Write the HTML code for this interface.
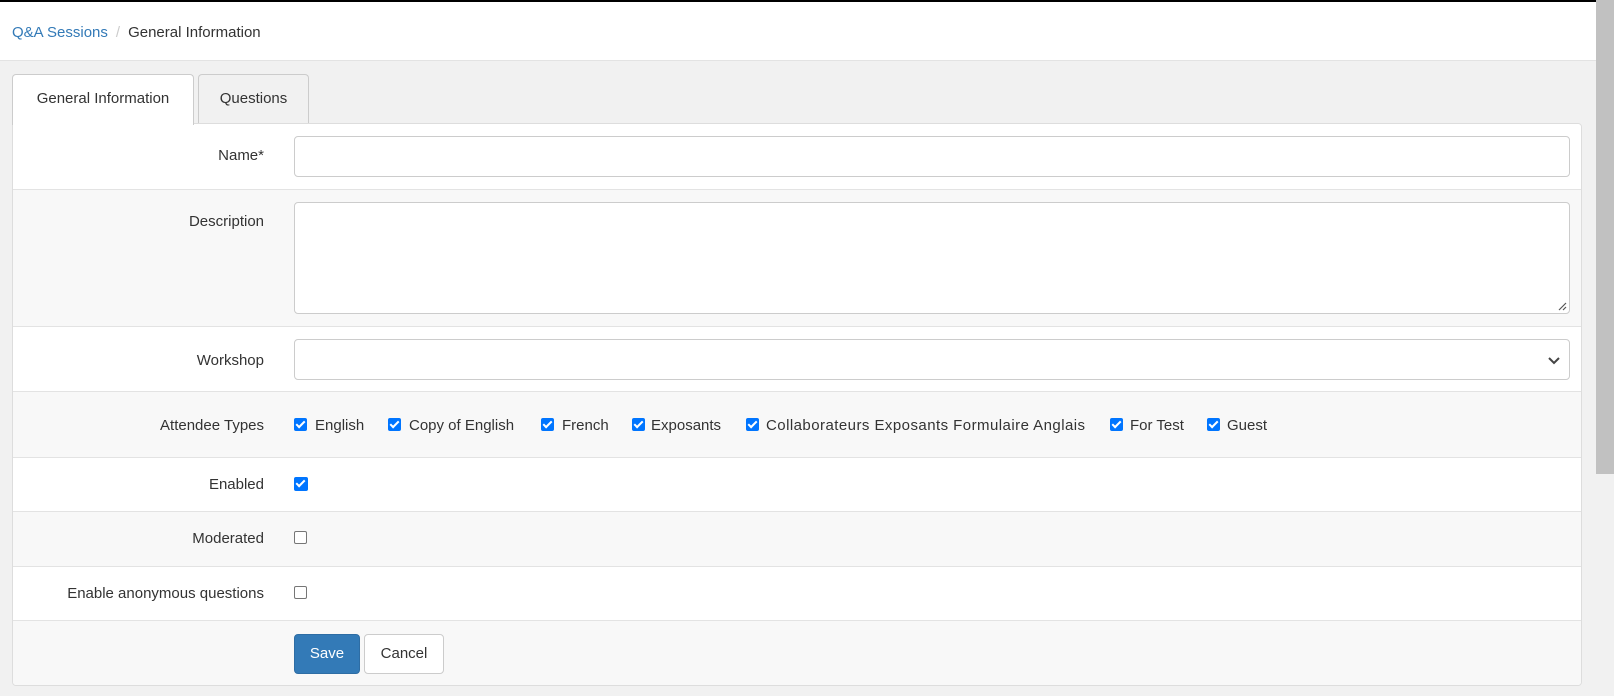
<!DOCTYPE html>
<html><head><meta charset="utf-8"><style>
*{box-sizing:border-box;margin:0;padding:0}
body{width:1614px;height:696px;overflow:hidden;background:#f1f1f1;font-family:"Liberation Sans",sans-serif;font-size:15px;color:#333;position:relative}
.top{position:absolute;left:0;top:0;width:1596px;height:2px;background:#000}
.hdr{position:absolute;left:0;top:2px;width:1596px;height:59px;background:#fff;border-bottom:1px solid #e3e3e3}
.bc{position:absolute;left:12px;top:22px;font-size:15px}
.bc a{color:#337ab7;text-decoration:none}
.bc .s{color:#ccc;margin:0 8px}
.sb{position:absolute;left:1596px;top:0;width:18px;height:696px;background:#f1f1f1}
.sb div{position:absolute;left:0;top:0;width:18px;height:474px;background:#c1c1c1}
.tab{position:absolute;top:74px;height:50px;border:1px solid #ccc;border-bottom:none;border-radius:4px 4px 0 0;padding-top:15px;text-align:center}
.panel{position:absolute;left:12px;top:123px;width:1570px;height:563px;background:#fff;border:1px solid #ddd;border-radius:0 4px 4px 4px;overflow:hidden}
.row{position:absolute;left:0;width:1570px;border-bottom:1px solid #e3e3e3}
.lab{position:absolute;right:1319px;text-align:right;white-space:nowrap;margin-top:3px}
.inp{position:absolute;left:281px;width:1276px;border:1px solid #ccc;border-radius:4px;background:#fff}
.cb{position:absolute;width:13px;height:13px;border-radius:2px;background:#0075ff}
.cb::after{content:"";position:absolute;left:4px;top:1px;width:3px;height:7px;border:solid #fff;border-width:0 2px 2px 0;transform:rotate(45deg)}
.ub{position:absolute;width:13px;height:13px;border-radius:2px;border:1px solid #767676;background:#fff}
.t{position:absolute;white-space:nowrap}
</style></head><body>
<div class="top"></div>
<div class="hdr"><div class="bc"><a>Q&amp;A Sessions</a><span class="s">/</span>General Information</div></div>
<div class="sb"><div></div></div>
<div class="tab" style="left:12px;width:182px;background:#fff;height:51px;z-index:2">General Information</div>
<div class="tab" style="left:198px;width:111px;background:#f1f1f1">Questions</div>
<div class="panel">
 <div class="row" style="top:0;height:66px;background:#fff"><div class="lab" style="top:20px">Name*</div><div class="inp" style="top:12px;height:41px"></div></div>
 <div class="row" style="top:66px;height:137px;background:#f8f8f8"><div class="lab" style="top:20px">Description</div><div class="inp" style="top:12px;height:112px">
  <svg style="position:absolute;right:2px;bottom:2px" width="10" height="10"><path d="M2 9L9 2M6 9L9 6" stroke="#555" stroke-width="1.2"/></svg></div></div>
 <div class="row" style="top:203px;height:65px;background:#fff"><div class="lab" style="top:22px">Workshop</div><div class="inp" style="top:12px;height:41px">
  <svg style="position:absolute;right:8px;top:15px" width="14" height="10"><path d="M2 3L7 8L12 3" stroke="#444" stroke-width="2" fill="none"/></svg></div></div>
 <div class="row" style="top:268px;height:66px;background:#f8f8f8"><div class="lab" style="top:22px">Attendee Types</div>
  <div class="cb" style="left:281px;top:26px"></div><div class="t" style="left:302px;top:25px">English</div>
  <div class="cb" style="left:375px;top:26px"></div><div class="t" style="left:396px;top:25px">Copy of English</div>
  <div class="cb" style="left:528px;top:26px"></div><div class="t" style="left:549px;top:25px">French</div>
  <div class="cb" style="left:619px;top:26px"></div><div class="t" style="left:638px;top:25px">Exposants</div>
  <div class="cb" style="left:733px;top:26px"></div><div class="t" style="left:753px;top:25px;letter-spacing:0.45px">Collaborateurs Exposants Formulaire Anglais</div>
  <div class="cb" style="left:1097px;top:26px"></div><div class="t" style="left:1117px;top:25px">For Test</div>
  <div class="cb" style="left:1194px;top:26px"></div><div class="t" style="left:1214px;top:25px">Guest</div>
 </div>
 <div class="row" style="top:334px;height:54px;background:#fff"><div class="lab" style="top:15px">Enabled</div><div class="cb" style="left:281px;top:19px;width:14px;height:14px"></div></div>
 <div class="row" style="top:388px;height:55px;background:#f8f8f8"><div class="lab" style="top:15px">Moderated</div><div class="ub" style="left:281px;top:19px"></div></div>
 <div class="row" style="top:443px;height:54px;background:#fff"><div class="lab" style="top:15px">Enable anonymous questions</div><div class="ub" style="left:281px;top:19px"></div></div>
 <div class="row" style="top:497px;height:66px;background:#f8f8f8;border-bottom:none">
  <div style="position:absolute;left:281px;top:13px;width:66px;height:40px;background:#337ab7;border:1px solid #2e6da4;border-radius:4px;color:#fff;text-align:center;line-height:38px">Save</div>
  <div style="position:absolute;left:351px;top:13px;width:80px;height:40px;background:#fff;border:1px solid #ccc;border-radius:4px;text-align:center;line-height:38px">Cancel</div>
 </div>
</div>
</body></html>
